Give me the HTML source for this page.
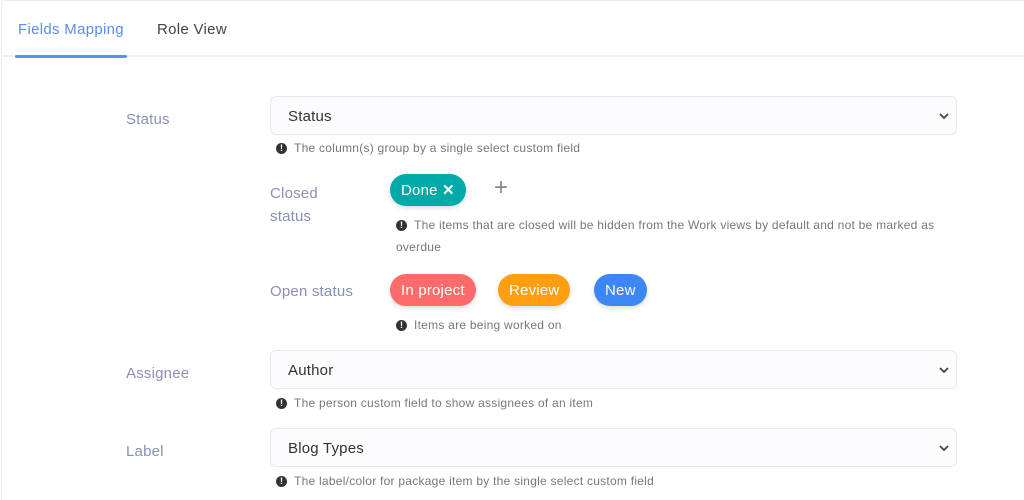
<!DOCTYPE html>
<html style="width:1024px;height:500px;overflow:hidden"><head><style>
*{margin:0;padding:0;box-sizing:border-box}
body{width:1024px;height:500px;background:#fff;font-family:"Liberation Sans",sans-serif;position:relative;overflow:hidden}
.a{position:absolute}
.frame{left:1px;top:0;width:1030px;height:520px;border:1px solid #ececee;border-radius:4px}
.tabline{left:1px;top:55px;width:1023px;height:2px;background:#efeff1}
.lbl{color:#8a8fb5;font-size:15px;letter-spacing:.2px}
.sel{left:270px;width:687px;height:39px;border:1px solid #e4e9f1;border-radius:6px;background:#fcfcfe;color:#333;font-size:15px;padding:11px 0 0 17px;letter-spacing:.2px}
.sel svg{position:absolute;right:6px;top:15px}
.hint{color:#777;font-size:12px;display:flex;align-items:center;letter-spacing:.25px}
.hint i{display:inline-block;width:11px;height:11px;border-radius:50%;background:#333;color:#fff;font-style:normal;font-size:9px;font-weight:bold;text-align:center;line-height:11px;margin-right:7px;letter-spacing:0}
.pill{height:32px;border-radius:16px;color:#fff;font-size:15px;line-height:34px;padding:0 11px;box-shadow:0 2px 5px rgba(0,0,0,.15);letter-spacing:.2px}
</style></head><body>
<div class="a frame"></div>
<div class="a" style="left:18px;top:21px;color:#5b8ef0;font-size:15px;letter-spacing:.3px">Fields Mapping</div>
<div class="a" style="left:157px;top:21px;color:#444;font-size:15px;letter-spacing:.3px">Role View</div>
<div class="a tabline"></div>
<div class="a" style="left:15px;top:55px;width:112px;height:3px;background:#5b8ef0;border-radius:2px"></div>

<div class="a lbl" style="left:126px;top:111px">Status</div>
<div class="a sel" style="top:96px">Status<svg width="12" height="8" viewBox="0 0 12 8"><path d="M2 2l4 4 4-4" stroke="#444" stroke-width="1.8" fill="none"/></svg></div>
<div class="a hint" style="left:276px;top:141px"><i>!</i>The column(s) group by a single select custom field</div>

<div class="a lbl" style="left:270px;top:182px;line-height:23px">Closed<br>status</div>
<div class="a pill" style="left:390px;top:174px;background:#00aaa6">Done <b>✕</b></div>
<div class="a" style="left:494px;top:174px;color:#888;font-size:24px;font-weight:300">+</div>
<div class="a hint" style="left:396px;top:218px"><i>!</i>The items that are closed will be hidden from the Work views by default and not be marked as</div>
<div class="a hint" style="left:396px;top:240px">overdue</div>

<div class="a lbl" style="left:270px;top:283px">Open status</div>
<div class="a pill" style="left:390px;top:274px;background:#ff6b6b">In project</div>
<div class="a pill" style="left:498px;top:274px;background:#ff9f10">Review</div>
<div class="a pill" style="left:594px;top:274px;background:#3d87f5">New</div>
<div class="a hint" style="left:396px;top:318px"><i>!</i>Items are being worked on</div>

<div class="a lbl" style="left:126px;top:365px">Assignee</div>
<div class="a sel" style="top:350px">Author<svg width="12" height="8" viewBox="0 0 12 8"><path d="M2 2l4 4 4-4" stroke="#444" stroke-width="1.8" fill="none"/></svg></div>
<div class="a hint" style="left:276px;top:396px"><i>!</i>The person custom field to show assignees of an item</div>

<div class="a lbl" style="left:126px;top:443px">Label</div>
<div class="a sel" style="top:428px">Blog Types<svg width="12" height="8" viewBox="0 0 12 8"><path d="M2 2l4 4 4-4" stroke="#444" stroke-width="1.8" fill="none"/></svg></div>
<div class="a hint" style="left:276px;top:474px"><i>!</i>The label/color for package item by the single select custom field</div>
</body></html>
